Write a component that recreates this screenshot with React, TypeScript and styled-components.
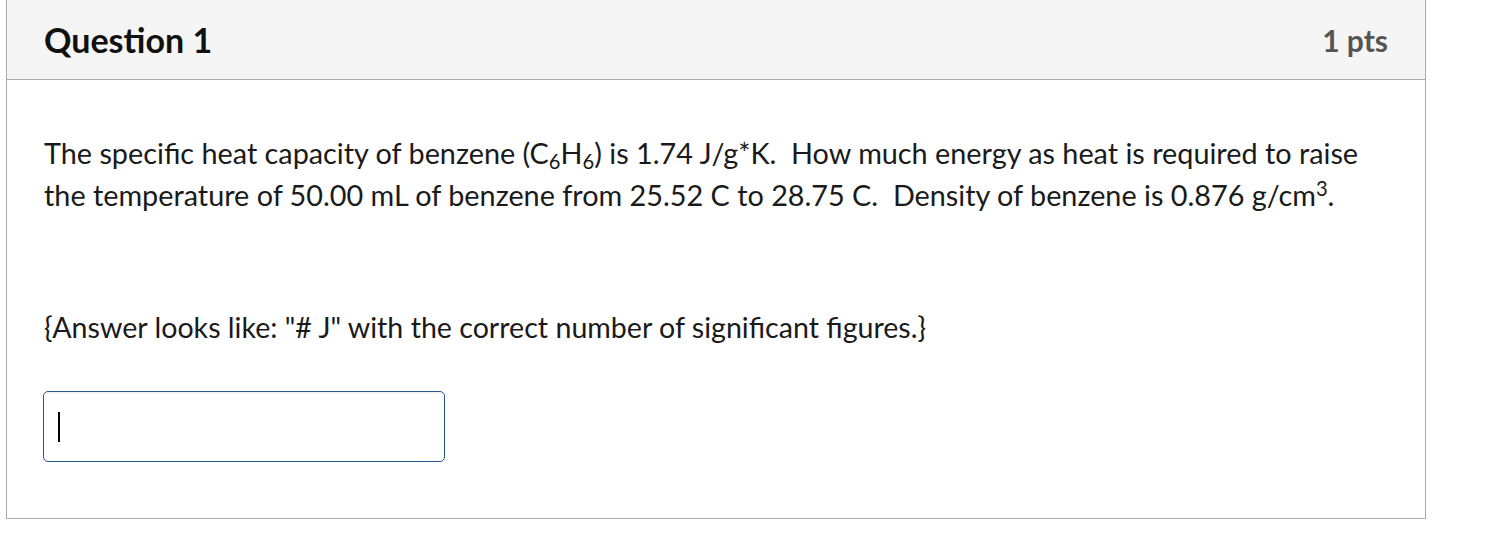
import React from "react";
import styled, { createGlobalStyle } from "styled-components";

const Global = createGlobalStyle`
  html, body { margin: 0; padding: 0; background: #fff; }
  body { font-family: Lato, "Open Sans", sans-serif; color: #1a1a1a; }
`;

const Page = styled.div`
  padding: 0 70px 0 6px;
`;

const Card = styled.section`
  border: 1px solid #aaaaaa;
  border-top: none;
  background: #fff;
`;

const Header = styled.header`
  height: 80px;
  background: #f5f5f5;
  border-bottom: 1px solid #aaaaaa;
  display: flex;
  align-items: center;
  justify-content: space-between;
  padding: 0 37px 0 37px;
  box-sizing: border-box;
`;

const Title = styled.h2`
  margin: 0;
  font-family: Lato, sans-serif;
  font-weight: 700;
  font-size: 34px;
  color: #111;
`;

const Points = styled.div`
  font-family: Lato, sans-serif;
  font-weight: 700;
  font-size: 30px;
  color: #555;
`;

const Body = styled.div`
  padding: 52px 37px 56px 37px;
`;

const Para = styled.p<{ $gap?: number; $size?: number }>`
  margin: 0 0 ${(p) => p.$gap ?? 0}px 0;
  font-size: ${(p) => p.$size ?? 28.6}px;
  line-height: 42px;
  color: #1a1a1a;
`;

const Sub = styled.sub`
  font-size: 0.7em;
  line-height: 0;
  vertical-align: -0.25em;
`;

const Sup = styled.sup`
  font-size: 0.7em;
  line-height: 0;
  vertical-align: 0.5em;
`;

const AnswerBox = styled.div`
  width: 402px;
  height: 71px;
  margin-left: -1px;
  box-sizing: border-box;
  border: 1px solid #2b5797;
  border-radius: 5px;
  display: flex;
  align-items: center;
  padding-left: 14px;
  box-shadow: inset 0 1px 2px rgba(0, 0, 0, 0.08);
`;

const Caret = styled.span`
  display: block;
  width: 2px;
  height: 30px;
  background: #000;
`;

export default function App() {
  return (
    <>
      <Global />
      <Page>
        <Card>
          <Header>
            <Title>Question 1</Title>
            <Points>1 pts</Points>
          </Header>
          <Body>
            <Para $gap={90} $size={28.8}>
              The specific heat capacity of benzene (C<Sub>6</Sub>H<Sub>6</Sub>) is 1.74 J/g*K.&nbsp; How much energy as heat is required to raise the temperature of 50.00 mL of benzene from 25.52 C to 28.75 C.&nbsp; Density of benzene is 0.876 g/cm<Sup>3</Sup>.
            </Para>
            <Para $gap={43}>
              {'{Answer looks like: "# J" with the correct number of significant figures.}'}
            </Para>
            <AnswerBox>
              <Caret />
            </AnswerBox>
          </Body>
        </Card>
      </Page>
    </>
  );
}
